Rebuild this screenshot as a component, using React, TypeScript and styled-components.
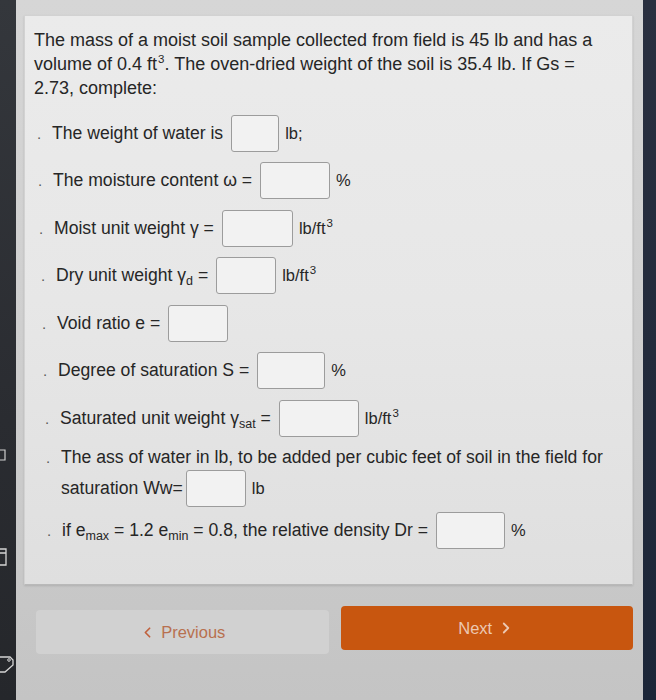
import React from "react";
import styled, { createGlobalStyle } from "styled-components";
import { ChevronLeft, ChevronRight } from "lucide-react";

const GlobalStyle = createGlobalStyle`
  html, body {
    margin: 0;
    padding: 0;
    background: #c9c9c9;
  }
  * {
    box-sizing: border-box;
  }
`;

const Screen = styled.div`
  width: 656px;
  height: 700px;
  display: flex;
  overflow: hidden;
  font-family: "Liberation Sans", Arial, sans-serif;
  color: #282828;
`;

const LeftBezel = styled.div`
  width: 16px;
  flex-shrink: 0;
  background: linear-gradient(180deg, #34373c 0%, #2a2c31 60%, #25272b 100%);
  display: flex;
  flex-direction: column;
  padding-top: 446px;
`;

const BezelIcon = styled.div<{ $gap: number }>`
  margin-top: ${(p) => p.$gap}px;
  height: 18px;
  display: flex;
  align-items: center;
`;

const Main = styled.div`
  flex: 1;
  background: linear-gradient(180deg, #d6d6d6 0%, #cdcdcd 60%, #c4c4c4 100%);
  padding: 15px 10px 0 8px;
  display: flex;
  flex-direction: column;
`;

const RightBezel = styled.div`
  width: 13px;
  flex-shrink: 0;
  background: linear-gradient(180deg, #2a3040 0%, #1c2638 100%);
`;

const Card = styled.div`
  height: 570px;
  background: linear-gradient(180deg, #ebebeb 0%, #e7e7e7 50%, #dfdfdf 100%);
  border: 1px solid #d2d2d2;
  border-bottom-color: #b9b9b9;
  box-shadow: 0 1px 2px rgba(0, 0, 0, 0.12);
  padding: 12px 14px 0 9px;
`;

const Question = styled.p`
  margin: 0;
  font-size: 18px;
  line-height: 24px;
  color: #262626;
`;

const List = styled.div`
  margin-top: 14px;
  display: flex;
  flex-direction: column;
  padding-left: 3px;
`;

const Row = styled.div<{ $gap?: number; $shift?: number }>`
  display: flex;
  align-items: center;
  height: 38px;
  margin-top: ${(p) => (p.$gap === undefined ? 9.5 : p.$gap)}px;
  padding-left: ${(p) => p.$shift ?? 0}px;
  font-size: 17.6px;
  white-space: nowrap;
`;

const Dot = styled.span`
  width: 15px;
  flex-shrink: 0;
  color: #5a5a5a;
  font-size: 15px;
`;

const Label = styled.span`
  color: #262626;
`;

const Box = styled.span<{ $w: number; $left?: number }>`
  display: inline-block;
  width: ${(p) => p.$w}px;
  height: 37px;
  margin: 0 6px 0 ${(p) => (p.$left === undefined ? 8 : p.$left)}px;
  background: #f2f2f2;
  border: 1px solid #9c9c9c;
  border-radius: 3px;
  flex-shrink: 0;
`;

const Unit = styled.span`
  font-size: 16.5px;
  color: #262626;
`;

const Sub = styled.sub`
  font-size: 12.5px;
  vertical-align: -4px;
  line-height: 0;
`;

const Sup = styled.sup`
  font-size: 11.5px;
  vertical-align: 7px;
  line-height: 0;
  margin-left: 1px;
`;

const Wrapped = styled.div<{ $shift: number }>`
  margin-top: 8px;
  padding-left: ${(p) => p.$shift}px;
  display: flex;
  flex-direction: column;
  font-size: 17.6px;
`;

const WrapLine = styled.div`
  display: flex;
  align-items: center;
  height: 24px;
  white-space: nowrap;
`;

const Indent = styled.div`
  display: flex;
  align-items: center;
  height: 38px;
  padding-left: 15px;
  white-space: nowrap;
`;

const Buttons = styled.div`
  margin-top: 25px;
  display: grid;
  grid-template-columns: 1fr 1fr;
  gap: 12px;
  padding-left: 12px;
  align-items: start;
`;

const NavButton = styled.button<{ $primary?: boolean }>`
  height: 44px;
  margin-top: ${(p) => (p.$primary ? "-4px" : "0")};
  border: none;
  border-radius: 4px;
  display: flex;
  align-items: center;
  justify-content: center;
  gap: 5px;
  font-family: "Liberation Sans", Arial, sans-serif;
  font-size: 16.5px;
  background: ${(p) => (p.$primary ? "#c8560f" : "#d1d1d1")};
  color: ${(p) => (p.$primary ? "#ecc8b2" : "#c0613d")};
`;

const PrevText = styled.span`
  color: #b8704f;
`;

export default function App() {
  return (
    <>
      <GlobalStyle />
      <Screen>
        <LeftBezel>
          <BezelIcon $gap={0}>
            <svg width="8" height="12" viewBox="0 0 8 12">
              <path d="M0 1 H5 V11 H0" fill="none" stroke="#cfcfcf" strokeWidth="1.2" />
            </svg>
          </BezelIcon>
          <BezelIcon $gap={84}>
            <svg width="8" height="18" viewBox="0 0 8 18">
              <path d="M0 1 H6 V17 H0 M0 5 H6" fill="none" stroke="#d4d4d4" strokeWidth="1.3" />
            </svg>
          </BezelIcon>
          <BezelIcon $gap={89}>
            <svg width="14" height="18" viewBox="0 0 14 18">
              <path d="M0 2 H10 L13 5 V10 L5 17 H0" fill="none" stroke="#d4d4d4" strokeWidth="1.3" />
              <circle cx="9" cy="5" r="1.3" fill="none" stroke="#d4d4d4" strokeWidth="1" />
            </svg>
          </BezelIcon>
        </LeftBezel>
        <Main>
          <Card>
            <Question>
              The mass of a moist soil sample collected from field is 45 lb and has a
              <br />
              volume of 0.4 ft<Sup>3</Sup>. The oven-dried weight of the soil is 35.4 lb. If Gs =
              <br />
              2.73, complete:
            </Question>
            <List>
              <Row $gap={0} $shift={0}>
                <Dot>.</Dot>
                <Label>The weight of water is</Label>
                <Box $w={48} />
                <Unit>lb;</Unit>
              </Row>
              <Row $shift={1}>
                <Dot>.</Dot>
                <Label>The moisture content ω =</Label>
                <Box $w={70} />
                <Unit>%</Unit>
              </Row>
              <Row $shift={2}>
                <Dot>.</Dot>
                <Label>Moist unit weight γ =</Label>
                <Box $w={71} />
                <Unit>
                  lb/ft<Sup>3</Sup>
                </Unit>
              </Row>
              <Row $shift={4}>
                <Dot>.</Dot>
                <Label>
                  Dry unit weight γ<Sub>d</Sub> =
                </Label>
                <Box $w={60} />
                <Unit>
                  lb/ft<Sup>3</Sup>
                </Unit>
              </Row>
              <Row $shift={5}>
                <Dot>.</Dot>
                <Label>Void ratio e =</Label>
                <Box $w={60} />
              </Row>
              <Row $shift={6}>
                <Dot>.</Dot>
                <Label>Degree of saturation S =</Label>
                <Box $w={68} />
                <Unit>%</Unit>
              </Row>
              <Row $shift={8}>
                <Dot>.</Dot>
                <Label>
                  Saturated unit weight γ<Sub>sat</Sub> =
                </Label>
                <Box $w={80} />
                <Unit>
                  lb/ft<Sup>3</Sup>
                </Unit>
              </Row>
              <Wrapped $shift={9}>
                <WrapLine>
                  <Dot>.</Dot>
                  <Label>
                    The ass of water in lb, to be added per cubic feet of soil in the field for
                  </Label>
                </WrapLine>
                <Indent>
                  <Label>saturation Ww=</Label>
                  <Box $w={60} $left={3} />
                  <Unit>lb</Unit>
                </Indent>
              </Wrapped>
              <Row $gap={4} $shift={10}>
                <Dot>.</Dot>
                <Label>
                  if e<Sub>max</Sub> = 1.2 e<Sub>min</Sub> = 0.8, the relative density Dr =
                </Label>
                <Box $w={69} />
                <Unit>%</Unit>
              </Row>
            </List>
          </Card>
          <Buttons>
            <NavButton>
              <ChevronLeft size={17} strokeWidth={2.4} color="#c0613d" />
              <PrevText>Previous</PrevText>
            </NavButton>
            <NavButton $primary>
              Next
              <ChevronRight size={18} strokeWidth={2.4} color="#ecc8b2" />
            </NavButton>
          </Buttons>
        </Main>
        <RightBezel />
      </Screen>
    </>
  );
}
